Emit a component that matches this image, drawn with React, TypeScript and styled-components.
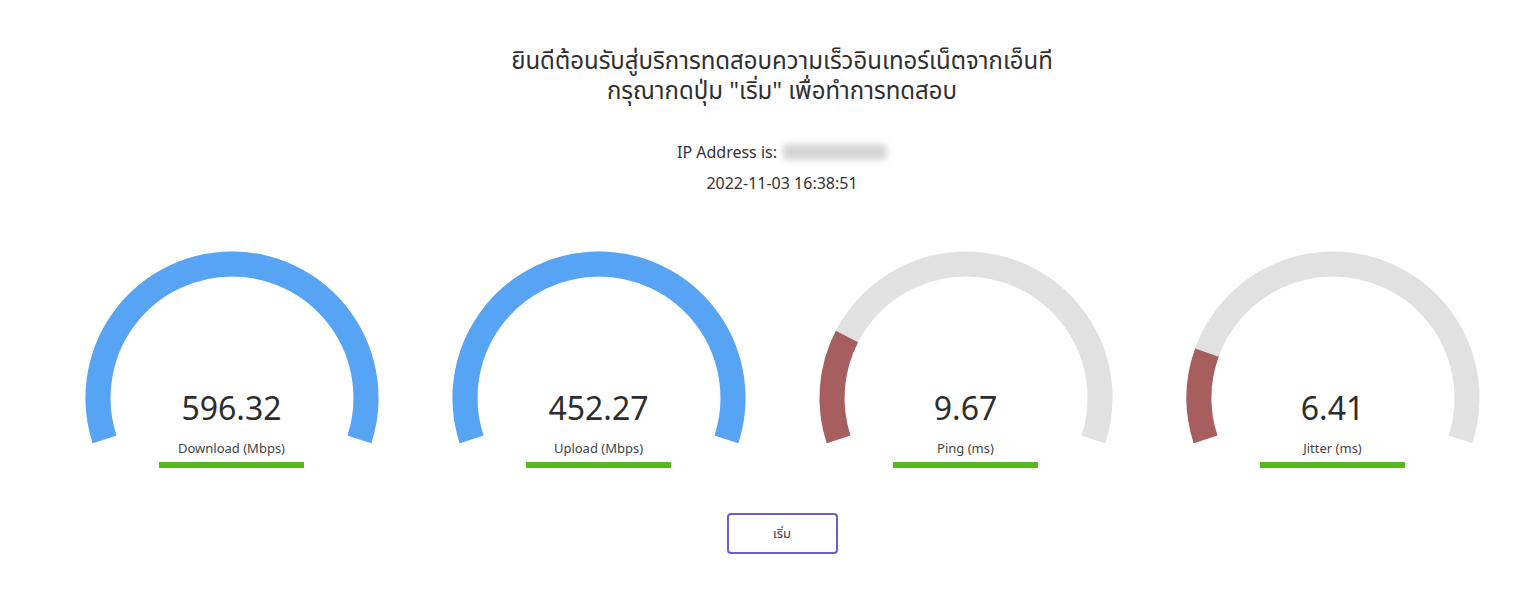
import React, { FC } from "react";
import styled, { createGlobalStyle } from "styled-components";

const GlobalStyle = createGlobalStyle`
  body {
    margin: 0;
    background: #ffffff;
    font-family: "Noto Sans", "Noto Sans Thai", "Noto Sans CJK SC", sans-serif;
    color: #333333;
  }
`;

const Page = styled.main`
  width: 1468px;
  margin-left: 48px;
  padding-top: 45px;
  display: flex;
  flex-direction: column;
  align-items: center;
`;

const Title = styled.h1`
  margin: 0;
  font-size: 24px;
  font-weight: 400;
  line-height: 30px;
  text-align: center;
  color: #2f2f2f;
`;

const Info = styled.div`
  margin-top: 36px;
  display: flex;
  flex-direction: column;
  align-items: center;
  gap: 9px;
  font-size: 16px;
  line-height: 22px;
`;

const IpRow = styled.div`
  display: flex;
  align-items: center;
  gap: 6px;
`;

const Blurred = styled.span`
  display: inline-block;
  width: 104px;
  height: 16px;
  background: #d6d6d6;
  border-radius: 4px;
  filter: blur(3px);
`;

const GaugeRow = styled.section`
  margin-top: 54px;
  width: 100%;
  display: grid;
  grid-template-columns: repeat(4, 1fr);
`;

const GaugeCard = styled.div`
  position: relative;
  display: flex;
  flex-direction: column;
  align-items: center;
`;

const Dial = styled.svg`
  display: block;
`;

const Readout = styled.div`
  position: absolute;
  top: 140px;
  left: 0;
  right: 0;
  display: flex;
  flex-direction: column;
  align-items: center;
`;

const Value = styled.div`
  font-size: 32px;
  line-height: 40px;
  color: #2d2d2d;
`;

const Label = styled.div`
  margin-top: 12px;
  font-size: 13px;
  line-height: 16px;
  color: #444444;
`;

const Underline = styled.div`
  margin-top: 6px;
  width: 145px;
  height: 6px;
  background: #55b91b;
`;

const StartButton = styled.button`
  margin-top: 65px;
  width: 111px;
  height: 41px;
  border: 2px solid #6b60c9;
  border-radius: 4px;
  background: #ffffff;
  font-family: inherit;
  font-size: 13px;
  color: #444444;
  cursor: pointer;
`;

interface IGaugeProps {
  value: string;
  label: string;
  fill: number;
  color: string;
}

const cx = 150;
const cy = 150;
const r = 134;
const rad = (d: number) => (d * Math.PI) / 180;
const start = { x: cx + r * Math.cos(rad(162)), y: cy + r * Math.sin(rad(162)) };
const end = { x: cx + r * Math.cos(rad(18)), y: cy + r * Math.sin(rad(18)) };
const arc = `M ${start.x} ${start.y} A ${r} ${r} 0 1 1 ${end.x} ${end.y}`;

const Gauge: FC<IGaugeProps> = ({ value, label, fill, color }) => (
  <GaugeCard>
    <Dial width="300" height="200" viewBox="0 0 300 200">
      <path d={arc} fill="none" stroke="#e1e1e1" strokeWidth="25" />
      <path
        d={arc}
        fill="none"
        stroke={color}
        strokeWidth="25"
        pathLength={100}
        strokeDasharray={`${fill} 100`}
      />
    </Dial>
    <Readout>
      <Value>{value}</Value>
      <Label>{label}</Label>
      <Underline />
    </Readout>
  </GaugeCard>
);

const gauges: IGaugeProps[] = [
  { value: "596.32", label: "Download (Mbps)", fill: 100, color: "#57a4f5" },
  { value: "452.27", label: "Upload (Mbps)", fill: 100, color: "#57a4f5" },
  { value: "9.67", label: "Ping (ms)", fill: 21, color: "#a65e5e" },
  { value: "6.41", label: "Jitter (ms)", fill: 17.5, color: "#a65e5e" },
];

const App: FC = () => (
  <>
    <GlobalStyle />
    <Page>
      <Title>
        ยินดีต้อนรับสู่บริการทดสอบความเร็วอินเทอร์เน็ตจากเอ็นที
        <br />
        กรุณากดปุ่ม "เริ่ม" เพื่อทำการทดสอบ
      </Title>
      <Info>
        <IpRow>
          IP Address is: <Blurred />
        </IpRow>
        <div>2022-11-03 16:38:51</div>
      </Info>
      <GaugeRow>
        {gauges.map((g) => (
          <Gauge key={g.label} {...g} />
        ))}
      </GaugeRow>
      <StartButton type="button">เริ่ม</StartButton>
    </Page>
  </>
);

export default App;
